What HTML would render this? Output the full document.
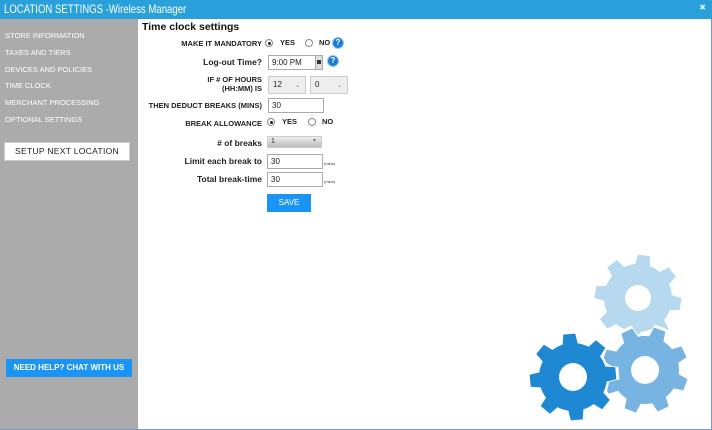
<!DOCTYPE html>
<html><head><style>
*{margin:0;padding:0;box-sizing:border-box}
body{width:712px;height:430px;overflow:hidden;background:#fff;font-family:"Liberation Sans",sans-serif;position:relative}
.title{position:absolute;left:0;top:0;width:712px;height:19px;background:#2aa0da;color:#fff}
.title span.tt{position:absolute;left:4px;top:0;font-size:12px;line-height:19px;transform:scaleX(0.8);transform-origin:left center;white-space:nowrap}
.x{position:absolute;right:6px;top:3px;font-size:8px;color:#dfefff}
.side{position:absolute;left:0;top:19px;width:138px;height:411px;background:#ababab}
.side .it{position:absolute;left:5px;color:#fff;font-size:7.5px;letter-spacing:0}
.btn1{position:absolute;left:4px;top:123px;width:126px;height:19px;background:#fff;border:1px solid #ccc;font-size:8.5px;text-align:center;line-height:17px;color:#222;letter-spacing:.3px}
.btn2{position:absolute;left:6px;top:340px;width:126px;height:18px;background:#1a95f5;color:#fff;font-size:8px;font-weight:bold;text-align:center;line-height:18px}
.frame{position:absolute;right:0;top:19px;width:1px;height:411px;background:#7b96d4}
.bot{position:absolute;left:0;bottom:0;width:712px;height:1px;background:#7b96d4}
.h{position:absolute;left:142px;top:21px;font-size:10.5px;font-weight:bold;color:#111}
.l{position:absolute;font-size:7.5px;font-weight:bold;color:#222;text-align:right;right:450px}
.lb{font-size:8.5px}
.inp{position:absolute;height:15px;border:1px solid #aaa;background:#fff;font-size:8px;line-height:13px;padding-left:3px;color:#222}
.sel{position:absolute;height:18px;border:1px solid #ccc;background:#eee;font-size:8px;padding:3px 0 0 4px;color:#222}
.sel i{position:absolute;right:5px;top:5px;font-style:normal;font-size:6px;color:#777}
.rad{position:absolute;width:8px;height:8px;border:1px solid #888;border-radius:50%;background:#fff}
.rad.on::after{content:"";position:absolute;left:1.5px;top:1.5px;width:3px;height:3px;border-radius:50%;background:#222}
.t{position:absolute;font-size:7.5px;font-weight:bold;color:#222}
.q{position:absolute;width:12px;height:12px;border-radius:50%;background:#1a7ed8;border:1.5px solid #9cc8f0;color:#fff;font-size:8px;font-weight:bold;text-align:center;line-height:10px}
.mins{position:absolute;font-size:4px;color:#333}
.save{position:absolute;left:267px;top:194px;width:44px;height:18px;background:#1a95f5;color:#fff;font-size:8px;text-align:center;line-height:18px}
</style></head><body>
<div class="title"><span class="tt">LOCATION SETTINGS -Wireless Manager</span><span class="x">✖</span></div>
<div class="side">
<div class="it" style="top:12px">STORE INFORMATION</div>
<div class="it" style="top:29px">TAXES AND TIERS</div>
<div class="it" style="top:46px">DEVICES AND POLICIES</div>
<div class="it" style="top:62px">TIME CLOCK</div>
<div class="it" style="top:79px">MERCHANT PROCESSING</div>
<div class="it" style="top:96px">OPTIONAL SETTINGS</div>
<div class="btn1">SETUP NEXT LOCATION</div>
<div class="btn2">NEED HELP? CHAT WITH US</div>
</div>
<div class="h">Time clock settings</div>
<div class="l" style="top:39px">MAKE IT MANDATORY</div>
<div class="rad on" style="left:265px;top:39px"></div><div class="t" style="left:280px;top:38px">YES</div>
<div class="rad" style="left:305px;top:39px"></div><div class="t" style="left:319px;top:38px">NO</div>
<div class="q" style="left:332px;top:37px">?</div>
<div class="l lb" style="top:57px">Log-out Time?</div>
<div class="inp" style="left:268px;top:55px;width:48px">9:00 PM</div>
<div class="inp" style="left:315px;top:55px;width:8px;background:#ddd"><span style="position:absolute;left:1px;top:4px;width:4px;height:4px;background:#333"></span></div>
<div class="q" style="left:327px;top:55px">?</div>
<div class="l" style="top:75px;line-height:9px">IF # OF HOURS<br>(HH:MM) IS</div>
<div class="sel" style="left:268px;top:76px;width:38px">12<i>⌄</i></div>
<div class="sel" style="left:310px;top:76px;width:38px">0<i>⌄</i></div>
<div class="l" style="top:101px">THEN DEDUCT BREAKS (MINS)</div>
<div class="inp" style="left:268px;top:98px;width:56px">30</div>
<div class="l" style="top:119px">BREAK ALLOWANCE</div>
<div class="rad on" style="left:267px;top:118px"></div><div class="t" style="left:282px;top:117px">YES</div>
<div class="rad" style="left:308px;top:118px"></div><div class="t" style="left:322px;top:117px">NO</div>
<div class="l lb" style="top:138px">#&nbsp;of breaks</div>
<div class="sel" style="left:267px;top:136px;width:55px;height:12px;padding:1px 0 0 3px;background:linear-gradient(#eee,#bbb);font-size:7px">1<i style="top:0">▾</i></div>
<div class="l lb" style="top:156px">Limit each break to</div>
<div class="inp" style="left:267px;top:154px;width:56px">30</div><div class="mins" style="left:324px;top:161px">(mins)</div>
<div class="l lb" style="top:174px">Total break-time</div>
<div class="inp" style="left:267px;top:172px;width:56px">30</div><div class="mins" style="left:324px;top:179px">(mins)</div>
<div class="save">SAVE</div>
<svg style="position:absolute;left:0;top:0" width="712" height="430">
<defs>
<g id="g"><circle r="34"/><g id="tt"><polygon points="-8,-30 8,-30 6,-43 -6,-43"/><polygon points="-8,30 8,30 6,43 -6,43"/></g>
<use href="#tt" transform="rotate(45)"/><use href="#tt" transform="rotate(90)"/><use href="#tt" transform="rotate(135)"/></g>
</defs>
<g fill="#b7d9f0" transform="translate(638,298) rotate(8)"><use href="#g"/></g>
<circle cx="638" cy="298" r="13" fill="#fff"/>
<g fill="#fff" transform="translate(645,370) rotate(20) scale(1.07)"><use href="#g"/></g>
<g fill="#78b4e1" transform="translate(645,370) rotate(20)"><use href="#g"/></g>
<circle cx="645" cy="370" r="14" fill="#fff"/>
<g fill="#fff" transform="translate(573,377) rotate(-5) scale(1.07)"><use href="#g"/></g>
<g fill="#1e88d2" transform="translate(573,377) rotate(-5)"><use href="#g"/></g>
<circle cx="573" cy="377" r="14" fill="#fff"/>
</svg>
<div class="frame"></div><div class="bot"></div>
</body></html>
